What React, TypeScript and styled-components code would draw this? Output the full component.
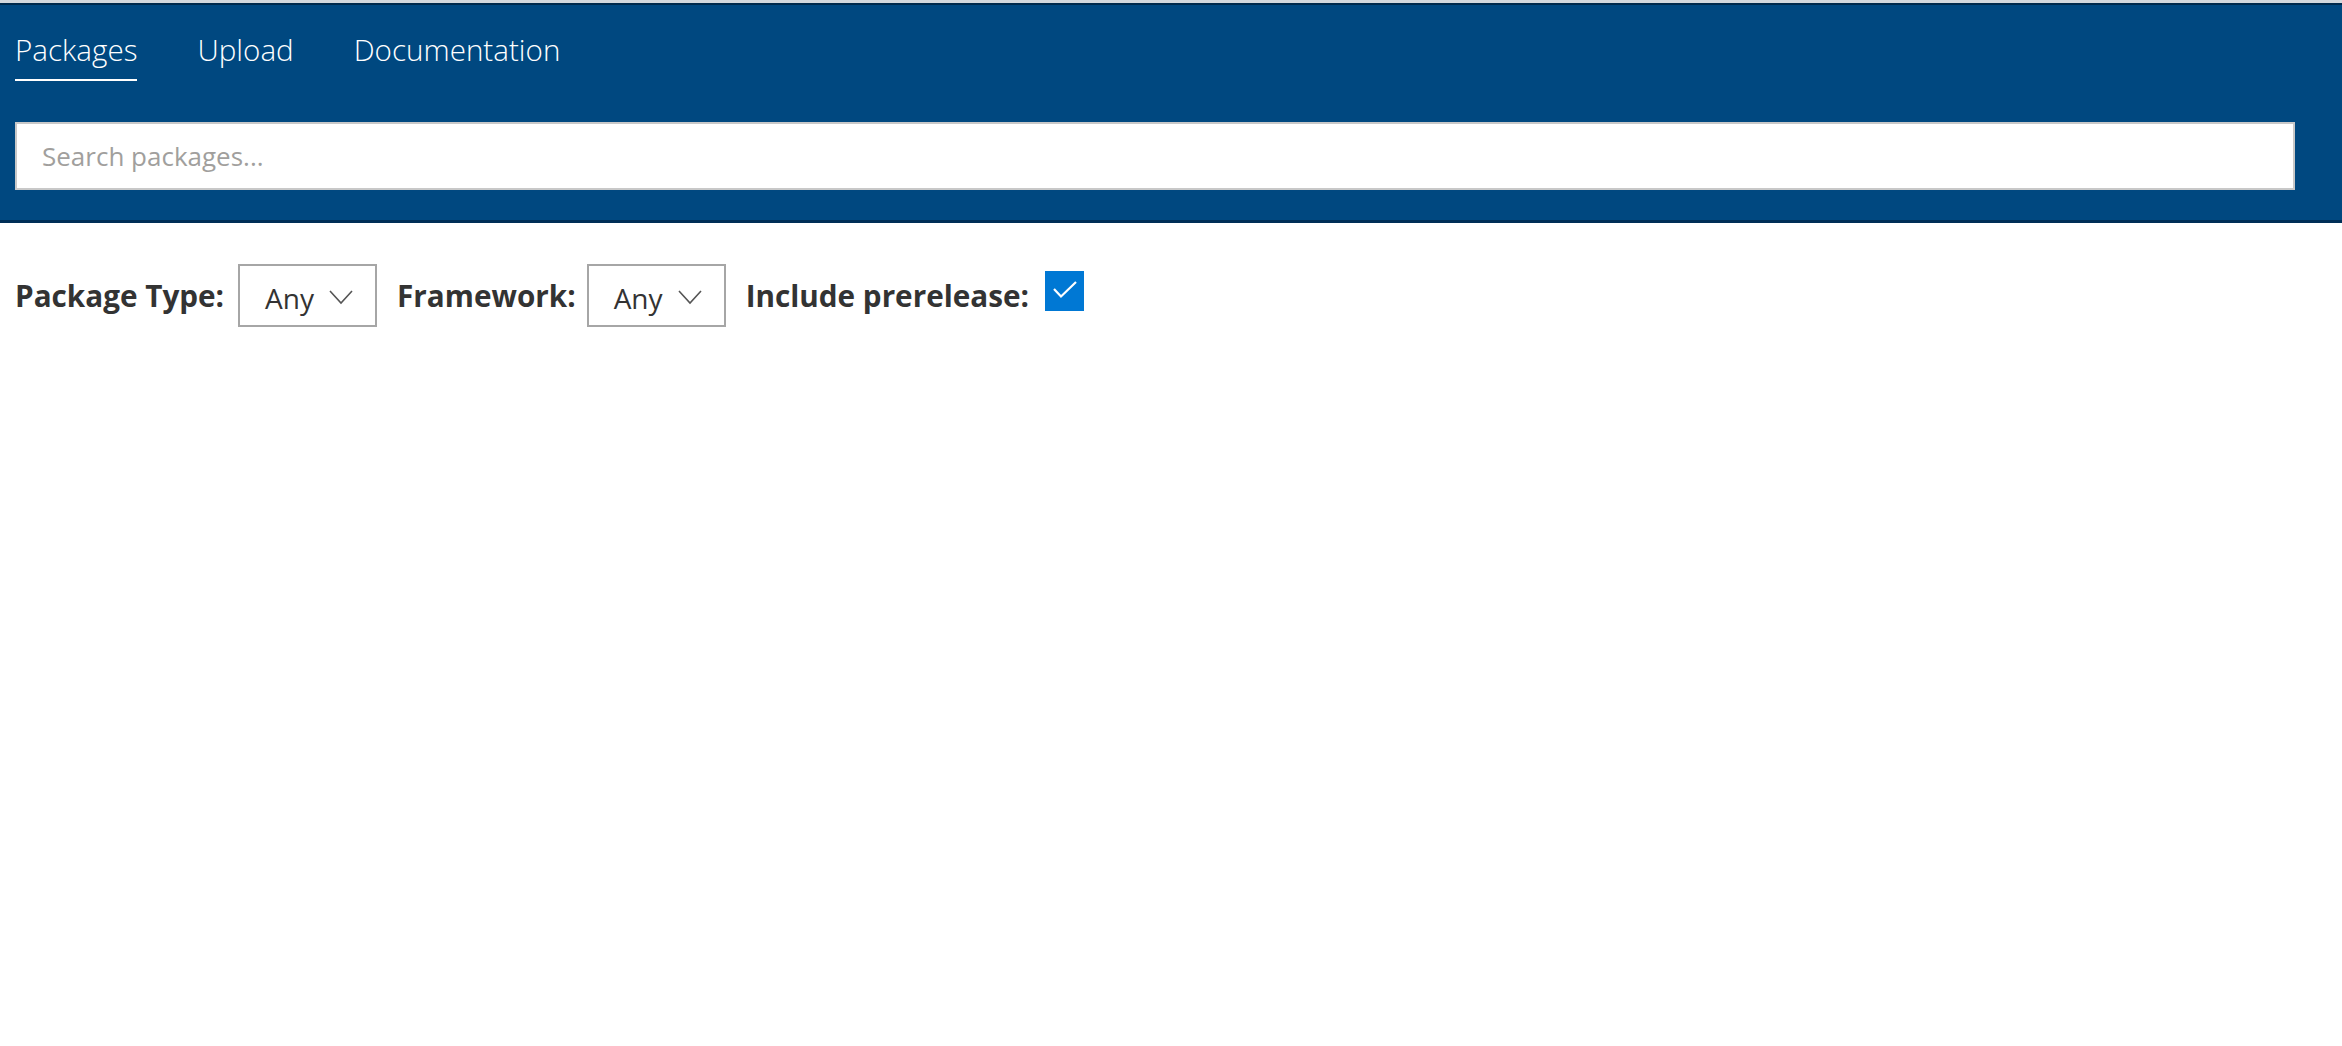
import React from 'react';
import styled, { createGlobalStyle } from 'styled-components';

const GlobalStyle = createGlobalStyle`
  html, body {
    margin: 0;
    padding: 0;
    background: #ffffff;
    font-family: "Open Sans", "Noto Sans", sans-serif;
    color: #333333;
  }
`;

const TopStrip = styled.div`
  height: 3px;
  background: #d4d9de;
`;

const Header = styled.header`
  background: #004880;
  border-top: 2px solid #002a4d;
  border-bottom: 3px solid #002f57;
  padding: 25px 47px 30px 15px;
`;

const Nav = styled.nav`
  display: flex;
  gap: 60px;
`;

const NavLink = styled.a<{ $active?: boolean }>`
  font-size: 29.6px;
  font-weight: 300;
  line-height: 40px;
  color: #ffffff;
  text-decoration: none;
  padding-bottom: 9px;
  border-bottom: 2px solid ${(p) => (p.$active ? '#ffffff' : 'transparent')};
  cursor: pointer;
`;

const SearchInput = styled.input`
  display: block;
  box-sizing: border-box;
  width: 100%;
  height: 68px;
  margin-top: 41px;
  padding: 0 25px;
  border: 2px solid #c8c8c8;
  outline: none;
  background: #ffffff;
  font-family: inherit;
  font-size: 26px;
  color: #333333;

  &::placeholder {
    color: #a19f9d;
  }
`;

const Filters = styled.div`
  display: flex;
  align-items: center;
  padding: 41px 15px 0;
`;

const Label = styled.span<{ $gap: number }>`
  font-size: 29.7px;
  font-weight: 700;
  color: #333333;
  margin-right: ${(p) => p.$gap}px;
`;

const Dropdown = styled.div`
  box-sizing: border-box;
  display: flex;
  align-items: center;
  justify-content: space-between;
  width: 139px;
  height: 63px;
  padding: 4px 22px 0 25px;
  margin-right: 20px;
  border: 2px solid #a6a6a6;
  font-size: 28px;
  color: #333333;
  cursor: pointer;
`;

const Checkbox = styled.span`
  display: inline-flex;
  align-items: center;
  justify-content: center;
  width: 39px;
  height: 40px;
  margin-bottom: 9px;
  background: #0078d4;
`;

function Chevron() {
  return (
    <svg width="24" height="15" viewBox="0 0 24 15">
      <path d="M1 1 L12 13 L23 1" fill="none" stroke="#555" strokeWidth="1.6" />
    </svg>
  );
}

function CheckMark() {
  return (
    <svg width="39" height="40" viewBox="0 0 39 40">
      <path d="M9 18 L16 25.5 L31 11" fill="none" stroke="#fff" strokeWidth="2.2" />
    </svg>
  );
}

export default function App() {
  return (
    <>
      <GlobalStyle />
      <TopStrip />
      <Header>
        <Nav>
          <NavLink $active>Packages</NavLink>
          <NavLink>Upload</NavLink>
          <NavLink>Documentation</NavLink>
        </Nav>
        <SearchInput placeholder="Search packages..." />
      </Header>
      <Filters>
        <Label $gap={14}>Package Type:</Label>
        <Dropdown>
          <span>Any</span>
          <Chevron />
        </Dropdown>
        <Label $gap={11}>Framework:</Label>
        <Dropdown>
          <span>Any</span>
          <Chevron />
        </Dropdown>
        <Label $gap={16}>Include prerelease:</Label>
        <Checkbox>
          <CheckMark />
        </Checkbox>
      </Filters>
    </>
  );
}
